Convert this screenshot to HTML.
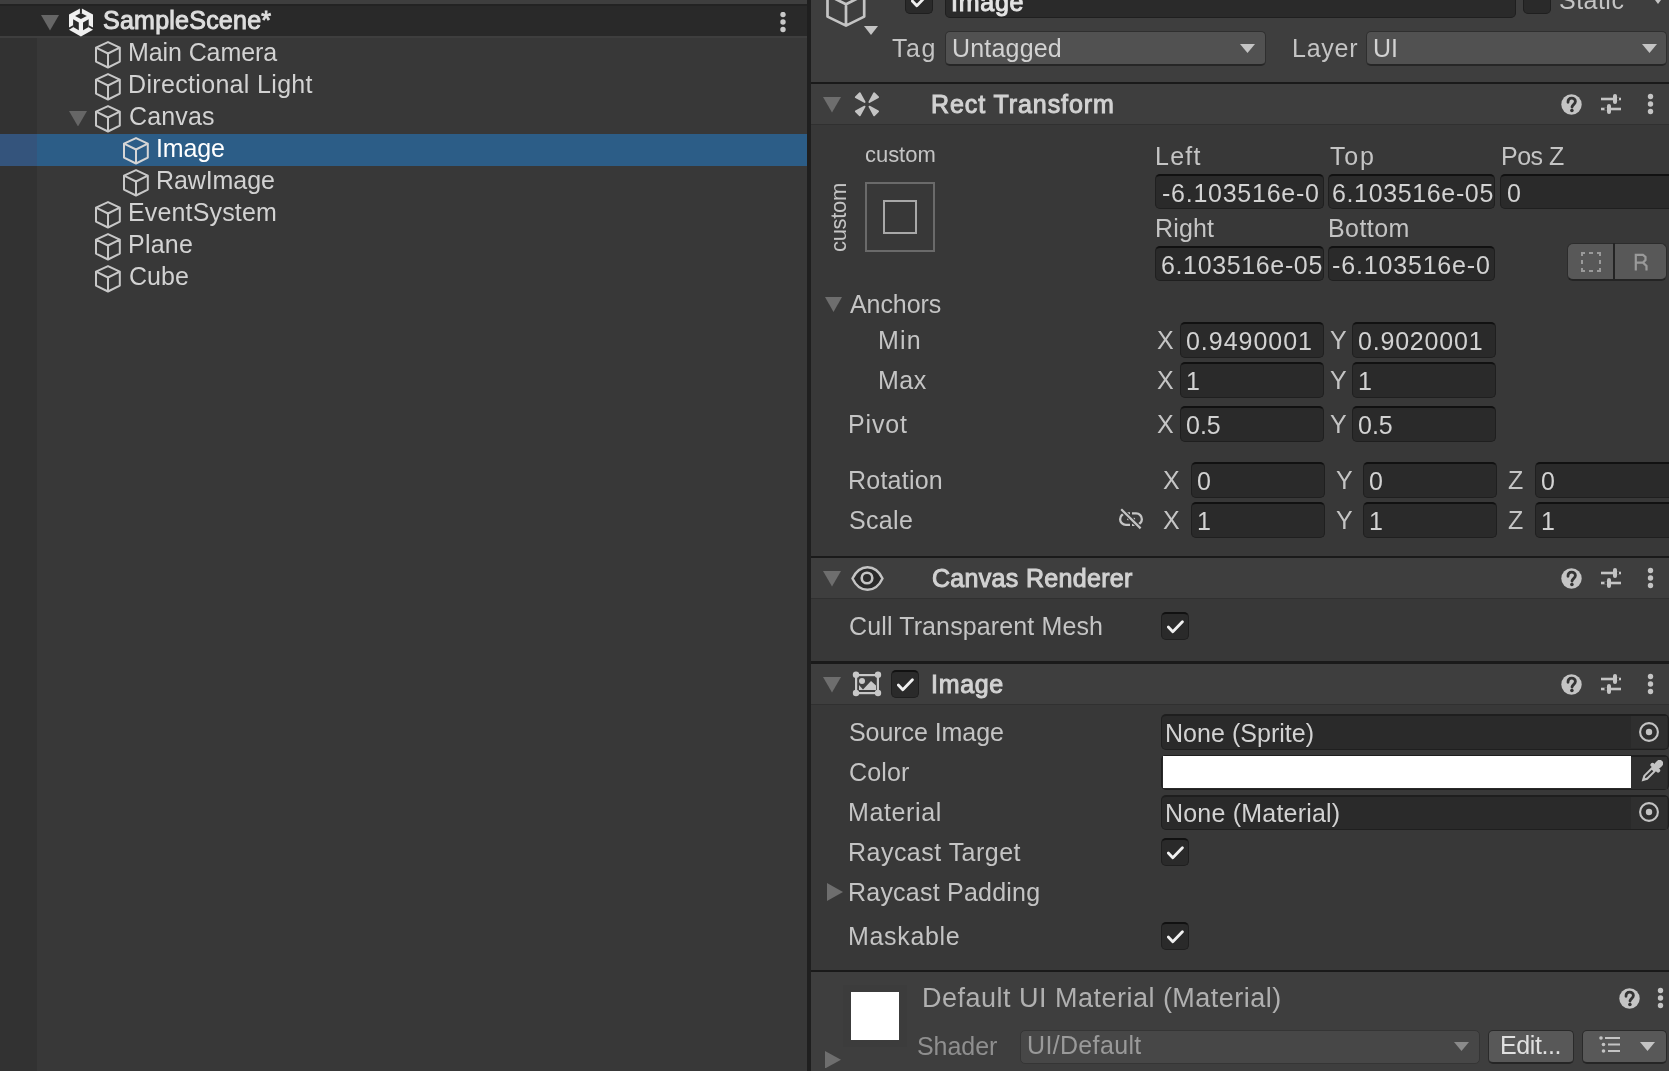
<!DOCTYPE html><html><head><meta charset="utf-8"><style>
html,body{margin:0;padding:0;width:1669px;height:1071px;overflow:hidden;background:#383838}
.r{position:absolute;box-sizing:border-box;display:block}
.t{position:absolute;white-space:nowrap;line-height:0;font-family:"Liberation Sans",sans-serif;will-change:transform}
</style></head><body>
<div class="r" style="left:0px;top:0px;width:807px;height:1071px;background:#383838;"></div>
<div class="r" style="left:0px;top:38px;width:37px;height:1033px;background:#323232;"></div>
<div class="r" style="left:0px;top:0px;width:807px;height:4px;background:#3e3e3e;"></div>
<div class="r" style="left:0px;top:4px;width:807px;height:2px;background:#232323;"></div>
<div class="r" style="left:0px;top:6px;width:807px;height:30px;background:#292929;"></div>
<div class="r" style="left:0px;top:36px;width:807px;height:2px;background:#3e3e3e;"></div>
<svg class="r" style="left:41px;top:15px;" width="18" height="15.5" viewBox="0 0 18 15.5"><polygon points="0,0 18,0 9.0,15.5" fill="#666666"/></svg>
<svg class="r" style="left:69px;top:7.7px;" width="24" height="29" viewBox="0 0 24 29"><polygon points="11.9,0 24,6.5 24,21.8 11.9,28.5 0,21.8 0,6.5" fill="#f0f0f0"/>
<g fill="#292929">
<rect x="10.9" y="-1" width="2" height="6.5"/>
<polygon points="6.1,7.9 11.9,4.9 17.8,7.9 11.9,11.1"/>
<polygon points="4.1,11.3 9.8,14.6 9.8,22.2 4.1,19"/>
<polygon points="19.7,11.3 14,14.6 14,22.2 19.7,19"/>
<polygon points="4.1,17.2 4.1,19.3 0,21.7 0,19.6"/>
<polygon points="19.7,17.2 19.7,19.3 24,21.7 24,19.6"/>
</g></svg>
<div class="t" style="left:103.40px;top:20.24px;font-size:25px;font-weight:400;color:#dedede;letter-spacing:0.241px;-webkit-text-stroke:1.0px #dedede;">SampleScene*</div>
<svg class="r" style="left:779px;top:12px;" width="8" height="22" viewBox="0 0 8 22"><circle cx="4" cy="2.5" r="2.7" fill="#c8c8c8"/><circle cx="4" cy="10" r="2.7" fill="#c8c8c8"/><circle cx="4" cy="17.5" r="2.7" fill="#c8c8c8"/></svg>
<svg class="r" style="left:95px;top:40.5px;" width="26" height="28" viewBox="0 0 26 28"><path d="M13 1.1 L24.8 6.6 L24.8 20.6 L13 26.5 L1 20.6 L1 6.6 Z M1 6.6 L13 12.5 L24.8 6.6 M13 12.5 L13 26.5" fill="none" stroke="#c8c8c8" stroke-width="2" stroke-linejoin="round"/></svg>
<div class="t" style="left:128.30px;top:52.14px;font-size:25px;font-weight:400;color:#d2d2d2;letter-spacing:-0.095px;">Main Camera</div>
<svg class="r" style="left:95px;top:72.5px;" width="26" height="28" viewBox="0 0 26 28"><path d="M13 1.1 L24.8 6.6 L24.8 20.6 L13 26.5 L1 20.6 L1 6.6 Z M1 6.6 L13 12.5 L24.8 6.6 M13 12.5 L13 26.5" fill="none" stroke="#c8c8c8" stroke-width="2" stroke-linejoin="round"/></svg>
<div class="t" style="left:128.30px;top:84.14px;font-size:25px;font-weight:400;color:#d2d2d2;letter-spacing:0.33px;">Directional Light</div>
<svg class="r" style="left:95px;top:104.5px;" width="26" height="28" viewBox="0 0 26 28"><path d="M13 1.1 L24.8 6.6 L24.8 20.6 L13 26.5 L1 20.6 L1 6.6 Z M1 6.6 L13 12.5 L24.8 6.6 M13 12.5 L13 26.5" fill="none" stroke="#c8c8c8" stroke-width="2" stroke-linejoin="round"/></svg>
<div class="t" style="left:129.30px;top:116.14px;font-size:25px;font-weight:400;color:#d2d2d2;letter-spacing:0.167px;">Canvas</div>
<svg class="r" style="left:69px;top:110.5px;" width="18" height="15.5" viewBox="0 0 18 15.5"><polygon points="0,0 18,0 9.0,15.5" fill="#666666"/></svg>
<div class="r" style="left:0px;top:134px;width:807px;height:32px;background:#2c5d87;"></div>
<div class="r" style="left:0px;top:134px;width:37px;height:32px;background:#34547c;"></div>
<svg class="r" style="left:123px;top:136.5px;" width="26" height="28" viewBox="0 0 26 28"><path d="M13 1.1 L24.8 6.6 L24.8 20.6 L13 26.5 L1 20.6 L1 6.6 Z M1 6.6 L13 12.5 L24.8 6.6 M13 12.5 L13 26.5" fill="none" stroke="#d6d6d6" stroke-width="2" stroke-linejoin="round"/></svg>
<div class="t" style="left:156.10px;top:148.14px;font-size:25px;font-weight:400;color:#ffffff;letter-spacing:-0.145px;">Image</div>
<svg class="r" style="left:123px;top:168.5px;" width="26" height="28" viewBox="0 0 26 28"><path d="M13 1.1 L24.8 6.6 L24.8 20.6 L13 26.5 L1 20.6 L1 6.6 Z M1 6.6 L13 12.5 L24.8 6.6 M13 12.5 L13 26.5" fill="none" stroke="#c8c8c8" stroke-width="2" stroke-linejoin="round"/></svg>
<div class="t" style="left:156.10px;top:180.14px;font-size:25px;font-weight:400;color:#d2d2d2;letter-spacing:-0.084px;">RawImage</div>
<svg class="r" style="left:95px;top:200.5px;" width="26" height="28" viewBox="0 0 26 28"><path d="M13 1.1 L24.8 6.6 L24.8 20.6 L13 26.5 L1 20.6 L1 6.6 Z M1 6.6 L13 12.5 L24.8 6.6 M13 12.5 L13 26.5" fill="none" stroke="#c8c8c8" stroke-width="2" stroke-linejoin="round"/></svg>
<div class="t" style="left:128.30px;top:212.14px;font-size:25px;font-weight:400;color:#d2d2d2;letter-spacing:0.155px;">EventSystem</div>
<svg class="r" style="left:95px;top:232.5px;" width="26" height="28" viewBox="0 0 26 28"><path d="M13 1.1 L24.8 6.6 L24.8 20.6 L13 26.5 L1 20.6 L1 6.6 Z M1 6.6 L13 12.5 L24.8 6.6 M13 12.5 L13 26.5" fill="none" stroke="#c8c8c8" stroke-width="2" stroke-linejoin="round"/></svg>
<div class="t" style="left:128.30px;top:244.14px;font-size:25px;font-weight:400;color:#d2d2d2;letter-spacing:0.241px;">Plane</div>
<svg class="r" style="left:95px;top:264.5px;" width="26" height="28" viewBox="0 0 26 28"><path d="M13 1.1 L24.8 6.6 L24.8 20.6 L13 26.5 L1 20.6 L1 6.6 Z M1 6.6 L13 12.5 L24.8 6.6 M13 12.5 L13 26.5" fill="none" stroke="#c8c8c8" stroke-width="2" stroke-linejoin="round"/></svg>
<div class="t" style="left:129.30px;top:276.14px;font-size:25px;font-weight:400;color:#d2d2d2;letter-spacing:0.046px;">Cube</div>
<div class="r" style="left:807px;top:0px;width:4px;height:1071px;background:#1f1f1f;"></div>
<div class="r" style="left:811px;top:0px;width:858px;height:1071px;background:#383838;"></div>
<div class="r" style="left:811px;top:0px;width:858px;height:82px;background:#3e3e3e;"></div>
<svg class="r" style="left:826px;top:-15.5px;" width="40" height="43" viewBox="0 0 40 43"><path d="M20 1.7 L38.2 10.1 L38.2 31.6 L20 40.6 L1.5 31.6 L1.5 10.1 Z M1.5 10.1 L20 19.2 L38.2 10.1 M20 19.2 L20 40.6" fill="none" stroke="#c4c4c4" stroke-width="2.7" stroke-linejoin="round" stroke-linecap="round"/></svg>
<svg class="r" style="left:864px;top:26px;" width="14" height="9" viewBox="0 0 14 9"><polygon points="0,0 14,0 7.0,9" fill="#c4c4c4"/></svg>
<div class="r" style="left:905px;top:-14px;width:28px;height:27.5px;background:#2a2a2a;border:1px solid #1f1f1f;border-top:2px solid #111111;border-radius:5px;"></div>
<svg class="r" style="left:910.5px;top:-6.5px;" width="17" height="14" viewBox="0 0 17 14"><polyline points="1.3,7 5.8,11.8 15.4,1.8" fill="none" stroke="#f0f0f0" stroke-width="2.8" stroke-linecap="round" stroke-linejoin="round"/></svg>
<div class="r" style="left:945px;top:-18px;width:571px;height:35.5px;background:#2a2a2a;border:1px solid #1f1f1f;border-top:2px solid #1f1f1f;border-radius:5px;"></div>
<div class="t" style="left:950.50px;top:1.54px;font-size:25px;font-weight:400;color:#e4e4e4;letter-spacing:0.755px;-webkit-text-stroke:1.0px #e4e4e4;">Image</div>
<div class="r" style="left:1523px;top:-15px;width:28px;height:28.5px;background:#2a2a2a;border:1px solid #1f1f1f;border-top:2px solid #1f1f1f;border-radius:5px;"></div>
<div class="t" style="left:1559.20px;top:0.24px;font-size:25px;font-weight:400;color:#c4c4c4;letter-spacing:0.475px;">Static</div>
<svg class="r" style="left:1652px;top:-4px;" width="12" height="8" viewBox="0 0 12 8"><polygon points="0,0 12,0 6.0,8" fill="#c4c4c4"/></svg>
<div class="t" style="left:892.00px;top:48.34px;font-size:25px;font-weight:400;color:#c4c4c4;letter-spacing:1.548px;">Tag</div>
<div class="r" style="left:945px;top:31px;width:321px;height:35px;background:#515151;border:1px solid #2f2f2f;border-bottom:2px solid #262626;border-radius:5px"></div>
<div class="t" style="left:951.50px;top:47.64px;font-size:25px;font-weight:400;color:#d2d2d2;letter-spacing:0.183px;">Untagged</div>
<svg class="r" style="left:1239.5px;top:44px;" width="15" height="9" viewBox="0 0 15 9"><polygon points="0,0 15,0 7.5,9" fill="#c4c4c4"/></svg>
<div class="t" style="left:1292.00px;top:48.34px;font-size:25px;font-weight:400;color:#c4c4c4;letter-spacing:0.772px;">Layer</div>
<div class="r" style="left:1366px;top:31px;width:301px;height:35px;background:#515151;border:1px solid #2f2f2f;border-bottom:2px solid #262626;border-radius:5px"></div>
<div class="t" style="left:1373.00px;top:47.84px;font-size:25px;font-weight:400;color:#d2d2d2;letter-spacing:-0.054px;">UI</div>
<svg class="r" style="left:1642px;top:44px;" width="15" height="9" viewBox="0 0 15 9"><polygon points="0,0 15,0 7.5,9" fill="#c4c4c4"/></svg>
<div class="r" style="left:811px;top:82px;width:858px;height:2px;background:#1a1a1a;"></div>
<div class="r" style="left:811px;top:84px;width:858px;height:40px;background:#3e3e3e;"></div>
<div class="r" style="left:811px;top:124px;width:858px;height:1px;background:#303030;"></div>
<svg class="r" style="left:823px;top:97px;" width="18" height="15.5" viewBox="0 0 18 15.5"><polygon points="0,0 18,0 9.0,15.5" fill="#6e6e6e"/></svg>
<svg class="r" style="left:853px;top:91.5px;" width="28" height="26" viewBox="0 0 28 26"><g fill="#c4c4c4" stroke="#c4c4c4" stroke-width="1.8" stroke-linejoin="round"><polygon points="2.8,5.2 6.8,1.2 11.6,10"/><polygon points="21.1,1.2 25.1,5.2 16.4,10"/><polygon points="2.8,19.4 6.8,23.4 11.6,14.6"/><polygon points="21.1,23.4 25.1,19.4 16.4,14.6"/></g></svg>
<div class="t" style="left:930.60px;top:104.34px;font-size:25px;font-weight:400;color:#d2d2d2;letter-spacing:0.923px;-webkit-text-stroke:1.0px #d2d2d2;">Rect Transform</div>
<svg class="r" style="left:1561px;top:94px;" width="21" height="21" viewBox="0 0 21 21"><circle cx="10.5" cy="10.5" r="10.2" fill="#c4c4c4"/><path d="M7 8.3 C7 5.4 8.8 4.2 10.7 4.2 C12.8 4.2 14.4 5.6 14.4 7.6 C14.4 10.2 11.4 10.3 11 13" fill="none" stroke="#333333" stroke-width="2.8" stroke-linecap="round"/><circle cx="10.9" cy="16.5" r="1.8" fill="#333333"/></svg>
<svg class="r" style="left:1600px;top:93px;" width="23" height="22" viewBox="0 0 23 22"><g stroke="#c4c4c4" stroke-linecap="butt"><line x1="1" y1="6" x2="21" y2="6" stroke-width="2.6"/><line x1="1" y1="16" x2="21" y2="16" stroke-width="2.6"/></g><rect x="13" y="1" width="4" height="10" rx="2" fill="#c4c4c4"/><rect x="7" y="11" width="4" height="10" rx="2" fill="#c4c4c4"/><rect x="4.5" y="14.6" width="2.5" height="2.8" fill="#3e3e3e"/><rect x="17" y="4.6" width="2" height="2.8" fill="#3e3e3e"/></svg>
<svg class="r" style="left:1646px;top:93px;" width="9" height="22" viewBox="0 0 9 22"><circle cx="4.5" cy="3.5" r="2.7" fill="#c4c4c4"/><circle cx="4.5" cy="11" r="2.7" fill="#c4c4c4"/><circle cx="4.5" cy="18.5" r="2.7" fill="#c4c4c4"/></svg>
<div class="r" style="left:811px;top:125px;width:858px;height:431px;background:#383838;"></div>
<div class="t" style="left:864.80px;top:155.38px;font-size:22px;font-weight:400;color:#c4c4c4;letter-spacing:-0.037px;">custom</div>
<div class="t" style="left:838.68px;top:252.00px;font-size:22px;color:#c4c4c4;letter-spacing:-0.320px;transform:rotate(-90deg);transform-origin:0 0">custom</div>
<div class="r" style="left:865px;top:182px;width:70px;height:70px;border:2px solid #6a6a6a"></div>
<div class="r" style="left:883px;top:200px;width:34px;height:34px;border:2px solid #a8a8a8"></div>
<div class="t" style="left:1155.40px;top:156.34px;font-size:25px;font-weight:400;color:#c4c4c4;letter-spacing:1.249px;">Left</div>
<div class="t" style="left:1330.20px;top:156.34px;font-size:25px;font-weight:400;color:#c4c4c4;letter-spacing:1.798px;">Top</div>
<div class="t" style="left:1501.00px;top:156.34px;font-size:25px;font-weight:400;color:#c4c4c4;letter-spacing:-0.506px;">Pos Z</div>
<div class="r" style="left:1155px;top:174px;width:169px;height:35px;background:#2a2a2a;border:1px solid #1f1f1f;border-top:2px solid #111111;border-radius:5px;"></div>
<div class="t" style="left:1161.60px;top:192.74px;font-size:25px;font-weight:400;color:#d2d2d2;letter-spacing:0.743px;">-6.103516e-0</div>
<div class="r" style="left:1328px;top:174px;width:167px;height:35px;background:#2a2a2a;border:1px solid #1f1f1f;border-top:2px solid #111111;border-radius:5px;"></div>
<div class="t" style="left:1332.40px;top:192.74px;font-size:25px;font-weight:400;color:#d2d2d2;letter-spacing:0.636px;">6.103516e-05</div>
<div class="r" style="left:1500px;top:174px;width:175px;height:35px;background:#2a2a2a;border:1px solid #1f1f1f;border-top:2px solid #111111;border-radius:5px;"></div>
<div class="t" style="left:1507.00px;top:192.64px;font-size:25px;font-weight:400;color:#d2d2d2;letter-spacing:0px;">0</div>
<div class="t" style="left:1155.40px;top:228.34px;font-size:25px;font-weight:400;color:#c4c4c4;letter-spacing:0.146px;">Right</div>
<div class="t" style="left:1328.20px;top:228.34px;font-size:25px;font-weight:400;color:#c4c4c4;letter-spacing:0.445px;">Bottom</div>
<div class="r" style="left:1155px;top:246px;width:169px;height:35px;background:#2a2a2a;border:1px solid #1f1f1f;border-top:2px solid #111111;border-radius:5px;"></div>
<div class="t" style="left:1160.50px;top:264.74px;font-size:25px;font-weight:400;color:#d2d2d2;letter-spacing:0.636px;">6.103516e-05</div>
<div class="r" style="left:1328px;top:246px;width:167px;height:35px;background:#2a2a2a;border:1px solid #1f1f1f;border-top:2px solid #111111;border-radius:5px;"></div>
<div class="t" style="left:1332.40px;top:264.74px;font-size:25px;font-weight:400;color:#d2d2d2;letter-spacing:0.834px;">-6.103516e-0</div>
<div class="r" style="left:1567px;top:243px;width:100px;height:37.5px;background:#585858;border:1px solid #2c2c2c;border-bottom:2px solid #242424;border-radius:6px"></div>
<div class="r" style="left:1613px;top:243px;width:2px;height:37px;background:#242424;"></div>
<svg class="r" style="left:1581px;top:252px;" width="20" height="20" viewBox="0 0 20 20"><g fill="#9a9a9a"><rect x="0" y="0" width="4" height="2"/><rect x="0" y="0" width="2" height="4"/><rect x="16" y="0" width="4" height="2"/><rect x="18" y="0" width="2" height="4"/><rect x="0" y="18" width="4" height="2"/><rect x="0" y="16" width="2" height="4"/><rect x="16" y="18" width="4" height="2"/><rect x="18" y="16" width="2" height="4"/><rect x="8" y="0" width="4" height="2"/><rect x="8" y="18" width="4" height="2"/><rect x="0" y="8" width="2" height="4"/><rect x="18" y="8" width="2" height="4"/></g></svg>
<svg class="r" style="left:1634px;top:253px;" width="14" height="18" viewBox="0 0 14 18"><path d="M1.8 17.5 L1.8 1.8 L9 1.8 L11.5 4 L11.5 7 L9 9.6 L1.8 9.6 M9 9.6 L12.5 13 L12.5 17.5" fill="none" stroke="#9a9a9a" stroke-width="2.2"/></svg>
<svg class="r" style="left:825px;top:297px;" width="17" height="15" viewBox="0 0 17 15"><polygon points="0,0 17,0 8.5,15" fill="#6e6e6e"/></svg>
<div class="t" style="left:849.80px;top:304.24px;font-size:25px;font-weight:400;color:#c4c4c4;letter-spacing:-0.085px;">Anchors</div>
<div class="t" style="left:878.20px;top:340.44px;font-size:25px;font-weight:400;color:#c4c4c4;letter-spacing:1.16px;">Min</div>
<div class="t" style="left:1157.00px;top:340.44px;font-size:25px;font-weight:400;color:#c4c4c4;letter-spacing:0px;">X</div>
<div class="r" style="left:1180px;top:322px;width:144px;height:35.5px;background:#2a2a2a;border:1px solid #1f1f1f;border-top:2px solid #111111;border-radius:5px;"></div>
<div class="t" style="left:1186.00px;top:340.64px;font-size:25px;font-weight:400;color:#d2d2d2;letter-spacing:0.966px;">0.9490001</div>
<div class="t" style="left:1330.00px;top:340.44px;font-size:25px;font-weight:400;color:#c4c4c4;letter-spacing:0px;">Y</div>
<div class="r" style="left:1352px;top:322px;width:144px;height:35.5px;background:#2a2a2a;border:1px solid #1f1f1f;border-top:2px solid #111111;border-radius:5px;"></div>
<div class="t" style="left:1358.00px;top:340.64px;font-size:25px;font-weight:400;color:#d2d2d2;letter-spacing:0.803px;">0.9020001</div>
<div class="t" style="left:878.20px;top:380.34px;font-size:25px;font-weight:400;color:#c4c4c4;letter-spacing:0.485px;">Max</div>
<div class="t" style="left:1157.00px;top:380.34px;font-size:25px;font-weight:400;color:#c4c4c4;letter-spacing:0px;">X</div>
<div class="r" style="left:1180px;top:362px;width:144px;height:35.5px;background:#2a2a2a;border:1px solid #1f1f1f;border-top:2px solid #111111;border-radius:5px;"></div>
<div class="t" style="left:1186.00px;top:380.64px;font-size:25px;font-weight:400;color:#d2d2d2;letter-spacing:0px;">1</div>
<div class="t" style="left:1330.00px;top:380.34px;font-size:25px;font-weight:400;color:#c4c4c4;letter-spacing:0px;">Y</div>
<div class="r" style="left:1352px;top:362px;width:144px;height:35.5px;background:#2a2a2a;border:1px solid #1f1f1f;border-top:2px solid #111111;border-radius:5px;"></div>
<div class="t" style="left:1358.00px;top:380.64px;font-size:25px;font-weight:400;color:#d2d2d2;letter-spacing:0px;">1</div>
<div class="t" style="left:847.80px;top:424.04px;font-size:25px;font-weight:400;color:#c4c4c4;letter-spacing:0.842px;">Pivot</div>
<div class="t" style="left:1157.00px;top:424.04px;font-size:25px;font-weight:400;color:#c4c4c4;letter-spacing:0px;">X</div>
<div class="r" style="left:1180px;top:406px;width:144px;height:35.5px;background:#2a2a2a;border:1px solid #1f1f1f;border-top:2px solid #111111;border-radius:5px;"></div>
<div class="t" style="left:1186.00px;top:424.64px;font-size:25px;font-weight:400;color:#d2d2d2;letter-spacing:0px;">0.5</div>
<div class="t" style="left:1330.00px;top:424.04px;font-size:25px;font-weight:400;color:#c4c4c4;letter-spacing:0px;">Y</div>
<div class="r" style="left:1352px;top:406px;width:144px;height:35.5px;background:#2a2a2a;border:1px solid #1f1f1f;border-top:2px solid #111111;border-radius:5px;"></div>
<div class="t" style="left:1358.00px;top:424.64px;font-size:25px;font-weight:400;color:#d2d2d2;letter-spacing:0px;">0.5</div>
<div class="t" style="left:847.80px;top:480.34px;font-size:25px;font-weight:400;color:#c4c4c4;letter-spacing:0.227px;">Rotation</div>
<div class="t" style="left:1163.00px;top:480.34px;font-size:25px;font-weight:400;color:#c4c4c4;letter-spacing:0px;">X</div>
<div class="r" style="left:1191px;top:462px;width:134px;height:35.5px;background:#2a2a2a;border:1px solid #1f1f1f;border-top:2px solid #111111;border-radius:5px;"></div>
<div class="t" style="left:1197.00px;top:480.64px;font-size:25px;font-weight:400;color:#d2d2d2;letter-spacing:0px;">0</div>
<div class="t" style="left:1336.00px;top:480.34px;font-size:25px;font-weight:400;color:#c4c4c4;letter-spacing:0px;">Y</div>
<div class="r" style="left:1363px;top:462px;width:134px;height:35.5px;background:#2a2a2a;border:1px solid #1f1f1f;border-top:2px solid #111111;border-radius:5px;"></div>
<div class="t" style="left:1369.00px;top:480.64px;font-size:25px;font-weight:400;color:#d2d2d2;letter-spacing:0px;">0</div>
<div class="t" style="left:1508.00px;top:480.34px;font-size:25px;font-weight:400;color:#c4c4c4;letter-spacing:0px;">Z</div>
<div class="r" style="left:1535px;top:462px;width:140px;height:35.5px;background:#2a2a2a;border:1px solid #1f1f1f;border-top:2px solid #111111;border-radius:5px;"></div>
<div class="t" style="left:1541.00px;top:480.64px;font-size:25px;font-weight:400;color:#d2d2d2;letter-spacing:0px;">0</div>
<div class="t" style="left:848.80px;top:519.94px;font-size:25px;font-weight:400;color:#c4c4c4;letter-spacing:0.342px;">Scale</div>
<div class="t" style="left:1163.00px;top:519.94px;font-size:25px;font-weight:400;color:#c4c4c4;letter-spacing:0px;">X</div>
<div class="r" style="left:1191px;top:502px;width:134px;height:35.5px;background:#2a2a2a;border:1px solid #1f1f1f;border-top:2px solid #111111;border-radius:5px;"></div>
<div class="t" style="left:1197.00px;top:520.64px;font-size:25px;font-weight:400;color:#d2d2d2;letter-spacing:0px;">1</div>
<div class="t" style="left:1336.00px;top:519.94px;font-size:25px;font-weight:400;color:#c4c4c4;letter-spacing:0px;">Y</div>
<div class="r" style="left:1363px;top:502px;width:134px;height:35.5px;background:#2a2a2a;border:1px solid #1f1f1f;border-top:2px solid #111111;border-radius:5px;"></div>
<div class="t" style="left:1369.00px;top:520.64px;font-size:25px;font-weight:400;color:#d2d2d2;letter-spacing:0px;">1</div>
<div class="t" style="left:1508.00px;top:519.94px;font-size:25px;font-weight:400;color:#c4c4c4;letter-spacing:0px;">Z</div>
<div class="r" style="left:1535px;top:502px;width:140px;height:35.5px;background:#2a2a2a;border:1px solid #1f1f1f;border-top:2px solid #111111;border-radius:5px;"></div>
<div class="t" style="left:1541.00px;top:520.64px;font-size:25px;font-weight:400;color:#d2d2d2;letter-spacing:0px;">1</div>
<svg class="r" style="left:1118px;top:508px;" width="27" height="22" viewBox="0 0 27 22"><g fill="none" stroke="#c4c4c4" stroke-width="2.3"><path d="M12 5.4 L7.85 5.4 A5.7 5.7 0 0 0 7.85 16.85 L12 16.85"/><path d="M14 5.4 L18.15 5.4 A5.7 5.7 0 0 1 18.15 16.85 L14 16.85"/></g><circle cx="10.2" cy="11" r="1.2" fill="#c4c4c4"/><circle cx="16" cy="11" r="1.2" fill="#c4c4c4"/><line x1="3.2" y1="1.3" x2="22.6" y2="20.4" stroke="#383838" stroke-width="4.5"/><line x1="3.2" y1="1.3" x2="22.6" y2="20.4" stroke="#c4c4c4" stroke-width="2.2"/></svg>
<div class="r" style="left:811px;top:556px;width:858px;height:2px;background:#1a1a1a;"></div>
<div class="r" style="left:811px;top:558px;width:858px;height:40px;background:#3e3e3e;"></div>
<div class="r" style="left:811px;top:598px;width:858px;height:1px;background:#303030;"></div>
<svg class="r" style="left:823px;top:571px;" width="18" height="15.5" viewBox="0 0 18 15.5"><polygon points="0,0 18,0 9.0,15.5" fill="#6e6e6e"/></svg>
<svg class="r" style="left:851px;top:566px;" width="33" height="25" viewBox="0 0 33 25"><path d="M1.5 12.5 C5 5 10 1.2 16.5 1.2 C23 1.2 28 5 31.5 12.5 C28 20 23 23.8 16.5 23.8 C10 23.8 5 20 1.5 12.5 Z" fill="#2a2a2a" stroke="#c4c4c4" stroke-width="2.4"/><circle cx="16" cy="12" r="5.3" fill="none" stroke="#c4c4c4" stroke-width="2.6"/></svg>
<div class="t" style="left:931.60px;top:578.34px;font-size:25px;font-weight:400;color:#d2d2d2;letter-spacing:0.314px;-webkit-text-stroke:1.0px #d2d2d2;">Canvas Renderer</div>
<svg class="r" style="left:1561px;top:568px;" width="21" height="21" viewBox="0 0 21 21"><circle cx="10.5" cy="10.5" r="10.2" fill="#c4c4c4"/><path d="M7 8.3 C7 5.4 8.8 4.2 10.7 4.2 C12.8 4.2 14.4 5.6 14.4 7.6 C14.4 10.2 11.4 10.3 11 13" fill="none" stroke="#333333" stroke-width="2.8" stroke-linecap="round"/><circle cx="10.9" cy="16.5" r="1.8" fill="#333333"/></svg>
<svg class="r" style="left:1600px;top:567px;" width="23" height="22" viewBox="0 0 23 22"><g stroke="#c4c4c4" stroke-linecap="butt"><line x1="1" y1="6" x2="21" y2="6" stroke-width="2.6"/><line x1="1" y1="16" x2="21" y2="16" stroke-width="2.6"/></g><rect x="13" y="1" width="4" height="10" rx="2" fill="#c4c4c4"/><rect x="7" y="11" width="4" height="10" rx="2" fill="#c4c4c4"/><rect x="4.5" y="14.6" width="2.5" height="2.8" fill="#3e3e3e"/><rect x="17" y="4.6" width="2" height="2.8" fill="#3e3e3e"/></svg>
<svg class="r" style="left:1646px;top:567px;" width="9" height="22" viewBox="0 0 9 22"><circle cx="4.5" cy="3.5" r="2.7" fill="#c4c4c4"/><circle cx="4.5" cy="11" r="2.7" fill="#c4c4c4"/><circle cx="4.5" cy="18.5" r="2.7" fill="#c4c4c4"/></svg>
<div class="r" style="left:811px;top:599px;width:858px;height:62px;background:#383838;"></div>
<div class="t" style="left:848.60px;top:626.34px;font-size:25px;font-weight:400;color:#c4c4c4;letter-spacing:0.123px;">Cull Transparent Mesh</div>
<div class="r" style="left:1161px;top:612px;width:28px;height:28px;background:#2a2a2a;border:1px solid #1f1f1f;border-top:2px solid #111111;border-radius:5px;"></div>
<svg class="r" style="left:1166.5px;top:619.5px;" width="17" height="14" viewBox="0 0 17 14"><polyline points="1.3,7 5.8,11.8 15.4,1.8" fill="none" stroke="#f0f0f0" stroke-width="2.8" stroke-linecap="round" stroke-linejoin="round"/></svg>
<div class="r" style="left:811px;top:661px;width:858px;height:3px;background:#1a1a1a;"></div>
<div class="r" style="left:811px;top:664px;width:858px;height:40px;background:#3e3e3e;"></div>
<div class="r" style="left:811px;top:704px;width:858px;height:1px;background:#303030;"></div>
<svg class="r" style="left:823px;top:677px;" width="18" height="15.5" viewBox="0 0 18 15.5"><polygon points="0,0 18,0 9.0,15.5" fill="#6e6e6e"/></svg>
<svg class="r" style="left:852px;top:671px;" width="30" height="27" viewBox="0 0 30 27"><g fill="#c8c8c8"><circle cx="4" cy="3.8" r="3.2"/><circle cx="26" cy="3.8" r="3.2"/><circle cx="4" cy="22" r="3.2"/><circle cx="26" cy="22" r="3.2"/><rect x="3" y="3" width="24" height="2.2"/><rect x="3" y="21" width="24" height="2.2"/><rect x="3" y="3" width="2.2" height="19"/><rect x="24.8" y="3" width="2.2" height="19"/><circle cx="10" cy="10" r="3"/><polygon points="7,14 11,18.5 19,10 24,14.5 24,19 7,19"/></g></svg>
<div class="r" style="left:891px;top:670px;width:28px;height:28px;background:#2a2a2a;border:1px solid #1f1f1f;border-top:2px solid #111111;border-radius:5px;"></div>
<svg class="r" style="left:896.5px;top:677.5px;" width="17" height="14" viewBox="0 0 17 14"><polyline points="1.3,7 5.8,11.8 15.4,1.8" fill="none" stroke="#f0f0f0" stroke-width="2.8" stroke-linecap="round" stroke-linejoin="round"/></svg>
<div class="t" style="left:930.60px;top:684.34px;font-size:25px;font-weight:400;color:#d2d2d2;letter-spacing:0.68px;-webkit-text-stroke:1.0px #d2d2d2;">Image</div>
<svg class="r" style="left:1561px;top:674px;" width="21" height="21" viewBox="0 0 21 21"><circle cx="10.5" cy="10.5" r="10.2" fill="#c4c4c4"/><path d="M7 8.3 C7 5.4 8.8 4.2 10.7 4.2 C12.8 4.2 14.4 5.6 14.4 7.6 C14.4 10.2 11.4 10.3 11 13" fill="none" stroke="#333333" stroke-width="2.8" stroke-linecap="round"/><circle cx="10.9" cy="16.5" r="1.8" fill="#333333"/></svg>
<svg class="r" style="left:1600px;top:673px;" width="23" height="22" viewBox="0 0 23 22"><g stroke="#c4c4c4" stroke-linecap="butt"><line x1="1" y1="6" x2="21" y2="6" stroke-width="2.6"/><line x1="1" y1="16" x2="21" y2="16" stroke-width="2.6"/></g><rect x="13" y="1" width="4" height="10" rx="2" fill="#c4c4c4"/><rect x="7" y="11" width="4" height="10" rx="2" fill="#c4c4c4"/><rect x="4.5" y="14.6" width="2.5" height="2.8" fill="#3e3e3e"/><rect x="17" y="4.6" width="2" height="2.8" fill="#3e3e3e"/></svg>
<svg class="r" style="left:1646px;top:673px;" width="9" height="22" viewBox="0 0 9 22"><circle cx="4.5" cy="3.5" r="2.7" fill="#c4c4c4"/><circle cx="4.5" cy="11" r="2.7" fill="#c4c4c4"/><circle cx="4.5" cy="18.5" r="2.7" fill="#c4c4c4"/></svg>
<div class="r" style="left:811px;top:705px;width:858px;height:265px;background:#383838;"></div>
<div class="t" style="left:848.80px;top:732.14px;font-size:25px;font-weight:400;color:#c4c4c4;letter-spacing:-0.067px;">Source Image</div>
<div class="r" style="left:1161px;top:714px;width:508px;height:35.5px;background:#2a2a2a;border:1px solid #1f1f1f;border-top:2px solid #1e1e1e;border-radius:5px;"></div>
<div class="r" style="left:1631px;top:716px;width:36px;height:32px;background:#2f2f2f;"></div>
<div class="t" style="left:1164.90px;top:733.34px;font-size:25px;font-weight:400;color:#d2d2d2;letter-spacing:0.038px;">None (Sprite)</div>
<svg class="r" style="left:1636px;top:720px;" width="26" height="24" viewBox="0 0 26 24"><circle cx="13" cy="12" r="8.9" fill="none" stroke="#c4c4c4" stroke-width="2.1"/><circle cx="13" cy="12" r="3.2" fill="#c4c4c4"/></svg>
<div class="t" style="left:848.80px;top:772.14px;font-size:25px;font-weight:400;color:#c4c4c4;letter-spacing:0.121px;">Color</div>
<div class="r" style="left:1161px;top:754.5px;width:508px;height:35.5px;background:#2a2a2a;border:1px solid #1f1f1f;border-top:2px solid #1e1e1e;border-radius:5px;"></div>
<div class="r" style="left:1163px;top:756px;width:468px;height:32px;background:#ffffff;"></div>
<div class="r" style="left:1631px;top:756.5px;width:36px;height:32px;background:#2f2f2f;"></div>
<svg class="r" style="left:1640px;top:760px;" width="23" height="23" viewBox="0 0 23 23"><g transform="translate(11.5,11.5) rotate(45) translate(0,-15)" fill="#c4c4c4"><rect x="-3.6" y="0" width="7.2" height="9" rx="3.6"/><rect x="-6" y="7.5" width="12" height="4.2" rx="2"/><path d="M-3 11 L3 11 L3 23.5 L0 29 L-3 23.5 Z M-1 13.5 L-1 22.5 L0 24.5 L1 22.5 L1 13.5 Z" fill-rule="evenodd"/></g></svg>
<div class="t" style="left:847.80px;top:811.94px;font-size:25px;font-weight:400;color:#c4c4c4;letter-spacing:0.62px;">Material</div>
<div class="r" style="left:1161px;top:794.5px;width:508px;height:35.5px;background:#2a2a2a;border:1px solid #1f1f1f;border-top:2px solid #1e1e1e;border-radius:5px;"></div>
<div class="r" style="left:1631px;top:796.5px;width:36px;height:32px;background:#2f2f2f;"></div>
<div class="t" style="left:1164.90px;top:813.34px;font-size:25px;font-weight:400;color:#d2d2d2;letter-spacing:0.203px;">None (Material)</div>
<svg class="r" style="left:1636px;top:800px;" width="26" height="24" viewBox="0 0 26 24"><circle cx="13" cy="12" r="8.9" fill="none" stroke="#c4c4c4" stroke-width="2.1"/><circle cx="13" cy="12" r="3.2" fill="#c4c4c4"/></svg>
<div class="t" style="left:847.80px;top:852.04px;font-size:25px;font-weight:400;color:#c4c4c4;letter-spacing:0.478px;">Raycast Target</div>
<div class="r" style="left:1161px;top:838px;width:28px;height:28px;background:#2a2a2a;border:1px solid #1f1f1f;border-top:2px solid #111111;border-radius:5px;"></div>
<svg class="r" style="left:1166.5px;top:845.5px;" width="17" height="14" viewBox="0 0 17 14"><polyline points="1.3,7 5.8,11.8 15.4,1.8" fill="none" stroke="#f0f0f0" stroke-width="2.8" stroke-linecap="round" stroke-linejoin="round"/></svg>
<svg class="r" style="left:827px;top:883px;" width="16" height="18" viewBox="0 0 16 18"><polygon points="0,0 16,9.0 0,18" fill="#6e6e6e"/></svg>
<div class="t" style="left:847.80px;top:892.34px;font-size:25px;font-weight:400;color:#c4c4c4;letter-spacing:0.222px;">Raycast Padding</div>
<div class="t" style="left:847.80px;top:936.34px;font-size:25px;font-weight:400;color:#c4c4c4;letter-spacing:0.673px;">Maskable</div>
<div class="r" style="left:1161px;top:922px;width:28px;height:28px;background:#2a2a2a;border:1px solid #1f1f1f;border-top:2px solid #111111;border-radius:5px;"></div>
<svg class="r" style="left:1166.5px;top:929.5px;" width="17" height="14" viewBox="0 0 17 14"><polyline points="1.3,7 5.8,11.8 15.4,1.8" fill="none" stroke="#f0f0f0" stroke-width="2.8" stroke-linecap="round" stroke-linejoin="round"/></svg>
<div class="r" style="left:811px;top:970px;width:858px;height:2px;background:#1a1a1a;"></div>
<div class="r" style="left:811px;top:972px;width:858px;height:99px;background:#3e3e3e;"></div>
<div class="r" style="left:843px;top:985px;width:64px;height:62px;background:#3c3c3c;"></div>
<div class="r" style="left:851px;top:991.5px;width:48px;height:48.5px;background:#ffffff;"></div>
<div class="t" style="left:922.00px;top:997.84px;font-size:27px;font-weight:400;color:#b0b0b0;letter-spacing:0.49px;">Default UI Material (Material)</div>
<div class="t" style="left:917.00px;top:1046.34px;font-size:25px;font-weight:400;color:#8f8f8f;letter-spacing:-0.058px;">Shader</div>
<div class="r" style="left:1020px;top:1030px;width:460px;height:34px;background:#474747;border:1px solid #353535;border-radius:5px"></div>
<div class="t" style="left:1027.00px;top:1045.34px;font-size:25px;font-weight:400;color:#9a9a9a;letter-spacing:0.343px;">UI/Default</div>
<svg class="r" style="left:1454px;top:1042px;" width="15" height="9" viewBox="0 0 15 9"><polygon points="0,0 15,0 7.5,9" fill="#8a8a8a"/></svg>
<div class="r" style="left:1488px;top:1029.5px;width:86px;height:34px;background:#585858;border:1px solid #2a2a2a;border-bottom:2px solid #252525;border-radius:5px"></div>
<div class="t" style="left:1500.40px;top:1045.34px;font-size:25px;font-weight:400;color:#e0e0e0;letter-spacing:-0.395px;">Edit...</div>
<div class="r" style="left:1582px;top:1029.5px;width:85px;height:34px;background:#585858;border:1px solid #2a2a2a;border-bottom:2px solid #252525;border-radius:5px"></div>
<svg class="r" style="left:1599px;top:1036px;" width="22" height="18" viewBox="0 0 22 18"><g fill="#c4c4c4"><circle cx="2" cy="2" r="1.8"/><circle cx="4.5" cy="8.5" r="1.8"/><circle cx="4.5" cy="15" r="1.8"/><rect x="6" y="1" width="15" height="2"/><rect x="9" y="7.5" width="12" height="2"/><rect x="9" y="14" width="12" height="2"/></g></svg>
<svg class="r" style="left:1640px;top:1042px;" width="15" height="9" viewBox="0 0 15 9"><polygon points="0,0 15,0 7.5,9" fill="#c4c4c4"/></svg>
<svg class="r" style="left:1619px;top:988px;" width="21" height="21" viewBox="0 0 21 21"><circle cx="10.5" cy="10.5" r="10.2" fill="#c4c4c4"/><path d="M7 8.3 C7 5.4 8.8 4.2 10.7 4.2 C12.8 4.2 14.4 5.6 14.4 7.6 C14.4 10.2 11.4 10.3 11 13" fill="none" stroke="#333333" stroke-width="2.8" stroke-linecap="round"/><circle cx="10.9" cy="16.5" r="1.8" fill="#333333"/></svg>
<svg class="r" style="left:1656px;top:987px;" width="9" height="22" viewBox="0 0 9 22"><circle cx="4.5" cy="3.5" r="2.7" fill="#c4c4c4"/><circle cx="4.5" cy="11" r="2.7" fill="#c4c4c4"/><circle cx="4.5" cy="18.5" r="2.7" fill="#c4c4c4"/></svg>
<svg class="r" style="left:825px;top:1050.5px;" width="16" height="17.5" viewBox="0 0 16 17.5"><polygon points="0,0 16,8.75 0,17.5" fill="#6e6e6e"/></svg>
</body></html>
